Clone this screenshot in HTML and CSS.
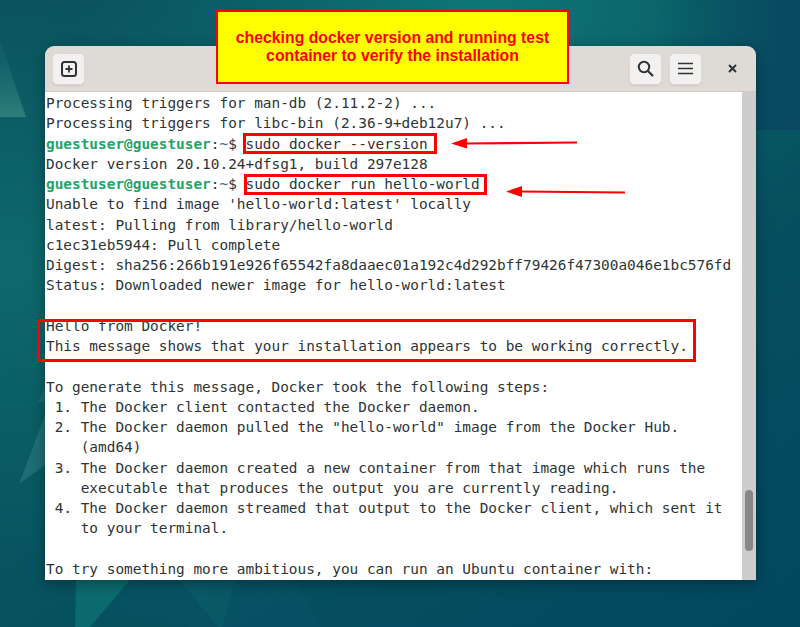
FILE: index.html
```html
<!DOCTYPE html>
<html lang="en">
<head>
<meta charset="utf-8">
<title>Terminal</title>
<link rel="stylesheet" href="styles.css">
</head>
<body>
<div class="desktop">
  <svg class="wallpaper" width="800" height="627" viewBox="0 0 800 627">
    <defs>
      <linearGradient id="bg" x1="0" y1="0" x2="0.9" y2="1">
        <stop offset="0" stop-color="#0a4f5c"/>
        <stop offset="0.5" stop-color="#07535f"/>
        <stop offset="1" stop-color="#03485f"/>
      </linearGradient>
      <radialGradient id="glow" cx="0.6" cy="0" r="0.5">
        <stop offset="0" stop-color="#0f7a78" stop-opacity="0.9"/>
        <stop offset="1" stop-color="#0f7a78" stop-opacity="0"/>
      </radialGradient>
      <radialGradient id="glowleft" cx="0" cy="0.42" r="0.5">
        <stop offset="0" stop-color="#0f6f70" stop-opacity="0.8"/>
        <stop offset="1" stop-color="#0f6f70" stop-opacity="0"/>
      </radialGradient>
      <linearGradient id="corner" x1="0" y1="0" x2="1" y2="0">
        <stop offset="0" stop-color="#08465f" stop-opacity="0"/>
        <stop offset="1" stop-color="#084660" stop-opacity="0.9"/>
      </linearGradient>
      <linearGradient id="shard" x1="0" y1="0" x2="0" y2="1">
        <stop offset="0" stop-color="#1a6a6c" stop-opacity="0.2"/>
        <stop offset="1" stop-color="#3a8a84" stop-opacity="0.75"/>
      </linearGradient>
    </defs>
    <rect width="800" height="627" fill="url(#bg)"/>
    <rect width="800" height="627" fill="url(#glow)"/>
    <rect width="800" height="627" fill="url(#glowleft)"/>
    <rect x="650" width="150" height="130" fill="url(#corner)"/>
    <polygon points="0,40 26,117 0,117" fill="url(#shard)"/>
    <polygon points="19,484 45,415 45,465" fill="#4b8f92" opacity="0.35"/>
    <polygon points="38,402 45,387 45,402" fill="#4b8f92" opacity="0.25"/>
    <polygon points="76,580 130,580 90,627 75,627" fill="#0d6e70" opacity="0.85"/>
    <polygon points="115,610 130,580 235,580 222,627 190,627" fill="#0a5566" opacity="0.4"/>
    <polygon points="180,580 235,580 223,627 218,627" fill="#0c6069" opacity="0.5"/>
    <polygon points="235,580 296,580 322,627 223,627" fill="#08566a" opacity="0.4"/>
  </svg>

  <main class="window">
    <header class="titlebar">
      <button class="btn btn-new" type="button" aria-label="New tab">
        <svg width="16" height="16" viewBox="0 0 16 16"><rect x="1" y="1" width="14" height="14" rx="2.5" fill="none" stroke="#2e3436" stroke-width="2"/><path d="M8 4.500v7M4.500 8h7" stroke="#2e3436" stroke-width="1.800" fill="none"/></svg>
      </button>
      <div class="spacer"></div>
      <button class="btn" type="button" aria-label="Search">
        <svg width="17" height="17" viewBox="0 0 17 17"><circle cx="7" cy="7" r="5.200" fill="none" stroke="#2e3436" stroke-width="2"/><path d="M11 11l5 5" stroke="#2e3436" stroke-width="2.200" fill="none"/></svg>
      </button>
      <button class="btn" type="button" aria-label="Menu">
        <svg width="15" height="13" viewBox="0 0 15 13"><path d="M0 1.500h15M0 6.500h15M0 11.500h15" stroke="#2e3436" stroke-width="1.700" fill="none"/></svg>
      </button>
      <button class="close" type="button" aria-label="Close">
        <svg width="9" height="9" viewBox="0 0 9 9"><path d="M1 1l7 7M8 1l-7 7" stroke="#2e3436" stroke-width="2" fill="none"/></svg>
      </button>
    </header>
    <div class="body">
      <pre class="term">Processing triggers for man-db (2.11.2-2) ...
Processing triggers for libc-bin (2.36-9+deb12u7) ...
<span class="host">guestuser@guestuser</span>:<span class="path">~</span>$ sudo docker --version
Docker version 20.10.24+dfsg1, build 297e128
<span class="host">guestuser@guestuser</span>:<span class="path">~</span>$ sudo docker run hello-world
Unable to find image 'hello-world:latest' locally
latest: Pulling from library/hello-world
c1ec31eb5944: Pull complete
Digest: sha256:266b191e926f65542fa8daaec01a192c4d292bff79426f47300a046e1bc576fd
Status: Downloaded newer image for hello-world:latest

Hello from Docker!
This message shows that your installation appears to be working correctly.

To generate this message, Docker took the following steps:
 1. The Docker client contacted the Docker daemon.
 2. The Docker daemon pulled the "hello-world" image from the Docker Hub.
    (amd64)
 3. The Docker daemon created a new container from that image which runs the
    executable that produces the output you are currently reading.
 4. The Docker daemon streamed that output to the Docker client, which sent it
    to your terminal.

To try something more ambitious, you can run an Ubuntu container with:</pre>
      <div class="scrollbar"><div class="thumb"></div></div>
    </div>
  </main>

  <div class="note">checking docker version and running test container to verify the installation</div>
  <div class="mark mark-version"></div>
  <div class="mark mark-run"></div>
  <div class="mark mark-hello"></div>
  <svg class="arrows" width="800" height="627" viewBox="0 0 800 627">
    <path d="M466 143.500L577 142.500" stroke="#f00" stroke-width="2.200" fill="none"/>
    <polygon points="451,143.500 467,138 467,148.500" fill="#f00"/>
    <path d="M520 191.500L625 192.500" stroke="#f00" stroke-width="2.200" fill="none"/>
    <polygon points="506,191.500 522,186 522,197" fill="#f00"/>
  </svg>
</div>
</body>
</html>
```
FILE: styles.css
```css
* { box-sizing: border-box; }
html, body { margin: 0; padding: 0; }
body { width: 800px; height: 627px; overflow: hidden; }
.desktop { position: relative; width: 800px; height: 627px; overflow: hidden; }
.wallpaper, .arrows { position: absolute; left: 0; top: 0; display: block; }
.window {
  position: absolute; left: 45px; top: 46px; width: 711px; height: 534px;
  display: flex; flex-direction: column;
  border-radius: 9px 9px 0 0; overflow: hidden;
  box-shadow: 0 3px 14px rgba(0,0,0,.35);
}
.titlebar {
  height: 46px; flex: none; display: flex; align-items: center; gap: 7px;
  padding: 0 7px; background: #dedad5; border-bottom: 1px solid #cfcbc6;
}
.spacer { flex: 1; }
.btn {
  width: 33px; height: 32px; padding: 0; display: flex; align-items: center; justify-content: center;
  background: #f2f1ef; border: 1px solid #dcd9d4; border-radius: 5px;
  box-shadow: 0 1px 1px rgba(0,0,0,.08);
}
.close {
  width: 33px; height: 32px; padding: 0; margin-left: 7px; display: flex; align-items: center; justify-content: center;
  background: transparent; border: 0;
}
.body { flex: 1; display: flex; min-height: 0; }
.term {
  flex: 1; margin: 0; padding: 1px 0 0 1px; background: #fff; overflow: hidden;
  font: 14.42px/20.25px "DejaVu Sans Mono", monospace; color: #2e3436;
}
.host { color: #26a269; font-weight: 700; }
.path { color: #3d6a94; }
.scrollbar { width: 14px; flex: none; background: #cdcdcd; padding: 398px 3px 0 3px; }
.thumb { width: 8px; height: 61px; background: #878787; border-radius: 4px; }
.note {
  position: absolute; left: 216px; top: 10px; width: 353px; height: 74px;
  display: flex; align-items: center; justify-content: center; text-align: center;
  padding: 0 14px;
  background: #ff0; border: 2px solid #f00; color: #f00;
  font: 700 15.8px/18.5px "Liberation Sans", sans-serif;
}
.mark { position: absolute; border: 3px solid #f00; }
.mark-version { left: 243px; top: 133px; width: 194px; height: 21px; }
.mark-run { left: 244px; top: 174px; width: 243px; height: 21px; }
.mark-hello { left: 37px; top: 319px; width: 659px; height: 43px; }
```
